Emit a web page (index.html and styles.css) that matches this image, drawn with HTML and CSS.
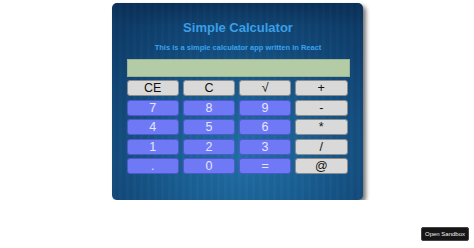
FILE: index.html
```html
<!DOCTYPE html>
<html>
<head>
<meta charset="utf-8">
<link rel="stylesheet" href="styles.css">
</head>
<body>
<div class="page">
  <div class="calc">
    <h1 class="title">Simple Calculator</h1>
    <p class="subtitle">This is a simple calculator app written in React</p>
    <div class="display"></div>
    <div class="keys">
      <button class="key op">CE</button>
      <button class="key op">C</button>
      <button class="key op">√</button>
      <button class="key op">+</button>
      <button class="key num">7</button>
      <button class="key num">8</button>
      <button class="key num">9</button>
      <button class="key op">-</button>
      <button class="key num">4</button>
      <button class="key num">5</button>
      <button class="key num">6</button>
      <button class="key op">*</button>
      <button class="key num">1</button>
      <button class="key num">2</button>
      <button class="key num">3</button>
      <button class="key op">/</button>
      <button class="key num">.</button>
      <button class="key num">0</button>
      <button class="key num">=</button>
      <button class="key op">@</button>
    </div>
  </div>
</div>
<a class="sandbox">Open Sandbox</a>
</body>
</html>
```
FILE: styles.css
```css
html, body {
  margin: 0;
  padding: 0;
  background: #ffffff;
  font-family: "Liberation Sans", Arial, sans-serif;
}
.page {
  padding-top: 3px;
}
.calc {
  box-sizing: border-box;
  width: 251px;
  height: 197px;
  margin: 0 auto;
  padding: 16.5px 13px 0 15px;
  border-radius: 5px;
  background-color: #134a7c;
  background-image:
    repeating-linear-gradient(90deg, rgba(255,255,255,0.012) 0 3px, rgba(0,0,0,0.025) 3px 7px),
    linear-gradient(180deg, rgba(5,30,60,0.35) 0%, rgba(5,30,60,0) 12%),
    radial-gradient(ellipse 75% 85% at 52% 78%, #2170a8 0%, #1a5f93 35%, #124a7b 70%, #0d3b67 100%);
  box-shadow: 3px 3px 4px rgba(0,0,0,0.55);
}
.title {
  margin: 0;
  text-align: center;
  font-size: 13px;
  line-height: 15px;
  font-weight: bold;
  color: #3a9fe6;
}
.subtitle {
  margin: 8px 0 0;
  text-align: center;
  font-size: 7.5px;
  line-height: 9px;
  font-weight: bold;
  color: #3aa2ea;
}
.display {
  width: 223px;
  height: 18px;
  margin-top: 7.5px;
  background: #b3cca6;
  box-shadow: inset 0 0 0 1px rgba(0,0,0,0.12);
}
.keys {
  width: 221px;
  margin-top: 3px;
  display: grid;
  grid-template-columns: repeat(4, 1fr);
  grid-auto-rows: 16px;
  column-gap: 3.7px;
  row-gap: 3.5px;
}
.key {
  margin: 0;
  padding: 0;
  border-radius: 3px;
  font-family: "Liberation Sans", Arial, sans-serif;
  font-size: 12.5px;
  line-height: 14px;
  text-align: center;
}
.op {
  background: #d9d9d9;
  border: 1px solid #8c8c8c;
  color: #111111;
}
.num {
  background: #6f79f6;
  border: 1px solid #4f59c8;
  color: #e4e6ff;
}
.sandbox {
  position: fixed;
  right: 5px;
  bottom: 7px;
  width: 48px;
  height: 14px;
  box-sizing: border-box;
  background: #151515;
  border: 1px solid #444;
  border-radius: 2px;
  color: #f0f0f0;
  font-size: 6px;
  line-height: 12px;
  text-align: center;
  white-space: nowrap;
}
```
